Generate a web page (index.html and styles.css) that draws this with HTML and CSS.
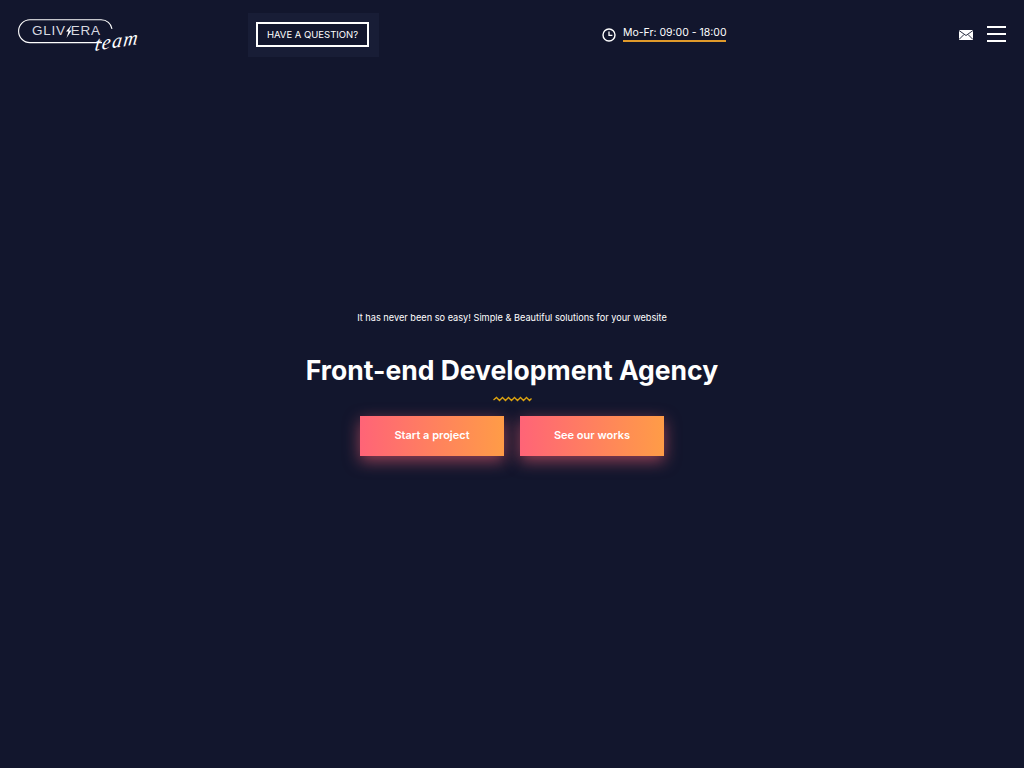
FILE: index.html
```html
<!DOCTYPE html>
<html lang="en">
<head>
<meta charset="utf-8">
<title>Glivera Team</title>
<link rel="stylesheet" href="styles.css">
</head>
<body>
<div class="page">
  <header class="header">
    <a class="logo">
      <svg class="logo-pill" width="96" height="26" viewBox="0 0 96 26" aria-hidden="true">
        <path d="M83 .8H12a11.400 11.400 0 0 0 0 22.800h72" fill="none" stroke="#fff" stroke-width="1.100"/>
        <path d="M83 .8c6 0 10 4 11 9" fill="none" stroke="#fff" stroke-width="1.100"/>
      </svg>
      <span class="logo-name">GLIV<svg class="logo-bolt" width="7" height="13" viewBox="0 0 7 13" aria-hidden="true"><path d="M6.500 0 1 6.500h2.500L1.500 13 6.500 5.500H4Z" fill="#fff"/></svg>ERA</span>
      <span class="logo-team">team</span>
    </a>
    <div class="question-wrap"><a class="question">HAVE A QUESTION?</a></div>
    <div class="hours">
      <svg class="clock" width="14" height="14" viewBox="0 0 14 14" aria-hidden="true">
        <circle cx="7" cy="7" r="6" fill="none" stroke="#fff" stroke-width="1.400"/>
        <path d="M7 3.400V7.400H10.400" fill="none" stroke="#fff" stroke-width="1.300"/>
      </svg>
      <span class="hours-text">Mo-Fr: 09:00 - 18:00</span>
    </div>
    <div class="actions">
      <svg class="mail" width="14" height="10" viewBox="0 0 14 10" aria-hidden="true">
        <rect width="14" height="10" fill="#fff"/>
        <path d="M0 .5 7 5.500 14 .5M0 9.500 5 4.500M14 9.500 9 4.500" fill="none" stroke="#12172e" stroke-width=".9"/>
      </svg>
      <div class="burger"><span></span><span></span><span></span></div>
    </div>
  </header>
  <main class="hero">
    <p class="tagline">It has never been so easy! Simple &amp; Beautiful solutions for your website</p>
    <h1 class="title">Front-end Development Agency</h1>
    <svg class="zigzag" width="39" height="6" viewBox="0 0 39 6" aria-hidden="true">
      <path d="M.5 4 3.500 1.500 6.500 4.500 9.500 1.500 12.500 4.500 15.500 1.500 18.500 4.500 21.500 1.500 24.500 4.500 27.500 1.500 30.500 4.500 33.500 1.500 36.500 4.500 38.500 2.500" fill="none" stroke="#e0a50f" stroke-width="1.300"/>
    </svg>
    <div class="buttons">
      <a class="btn">Start a project</a>
      <a class="btn">See our works</a>
    </div>
  </main>
</div>
</body>
</html>
```
FILE: styles.css
```css
* { box-sizing: border-box; }
html, body { margin: 0; height: 100%; }
body {
  background: #12162d;
  color: #fff;
  font-family: "Inter", "Liberation Sans", sans-serif;
  overflow: hidden;
}
.page { height: 768px; display: flex; flex-direction: column; }

.header {
  height: 70px;
  flex: none;
  display: flex;
  align-items: flex-start;
  padding: 13px 18px 0;
}
.logo {
  position: relative;
  display: block;
  width: 122px;
  height: 40px;
  flex: none;
  margin-top: 6px;
}
.logo-pill { display: block; }
.logo-name {
  position: absolute;
  left: 14px;
  top: 4px;
  font: 400 13.500px/16px "Liberation Sans", sans-serif;
  letter-spacing: .75px;
  color: #d8dae0;
  display: flex;
  align-items: center;
  white-space: nowrap;
}
.logo-bolt { margin: 0 -1px; }
.logo-team {
  position: absolute;
  left: 76px;
  top: 16px;
  font: italic 400 20px/18px "Liberation Serif", serif;
  letter-spacing: 1.500px;
  color: #fff;
  transform: rotate(-9deg) skewX(-16deg);
  transform-origin: left bottom;
}
.question-wrap {
  margin-left: 108px;
  width: 131px;
  height: 44px;
  flex: none;
  padding: 9px 8px;
  background: #181d36;
}
.question {
  display: flex;
  align-items: center;
  justify-content: center;
  height: 25px;
  width: 113px;
  border: 2px solid #fff;
  background: #12162d;
  font-size: 9.500px;
  font-weight: 400;
  white-space: nowrap;
}
.hours {
  margin-left: 223px;
  display: flex;
  align-items: center;
  gap: 7px;
  margin-top: 13px;
  flex: none;
}
.clock { display: block; margin-top: 2px; }
.hours-text {
  display: block;
  font-size: 10.500px;
  line-height: 14px;
  border-bottom: 2px solid #e09a2b;
  padding-bottom: 0;
  width: 103px;
  white-space: nowrap;
}
.actions {
  margin-left: auto;
  display: flex;
  align-items: center;
  gap: 14px;
  margin-top: 13px;
}
.mail { display: block; margin-top: 1px; }
.burger {
  width: 19px;
  display: flex;
  flex-direction: column;
  gap: 5px;
}
.burger span { display: block; height: 2px; background: #fff; }

.hero {
  display: flex;
  flex-direction: column;
  align-items: center;
  padding-top: 241px;
}
.tagline {
  margin: 0;
  font-size: 9.200px;
  line-height: 14px;
  white-space: nowrap;
}
.title {
  margin: 26px 0 0;
  font-size: 26.500px;
  line-height: 38px;
  font-weight: 700;
  white-space: nowrap;
}
.zigzag { display: block; margin-top: 7px; }
.buttons {
  display: flex;
  gap: 16px;
  margin-top: 14px;
}
.btn {
  display: flex;
  align-items: center;
  justify-content: center;
  width: 144px;
  height: 40px;
  padding-bottom: 2px;
  background: linear-gradient(90deg, #ff6477, #ff9c47);
  box-shadow: 0 5px 16px rgba(255, 100, 119, .55);
  font-size: 11px;
  font-weight: 600;
}
```
